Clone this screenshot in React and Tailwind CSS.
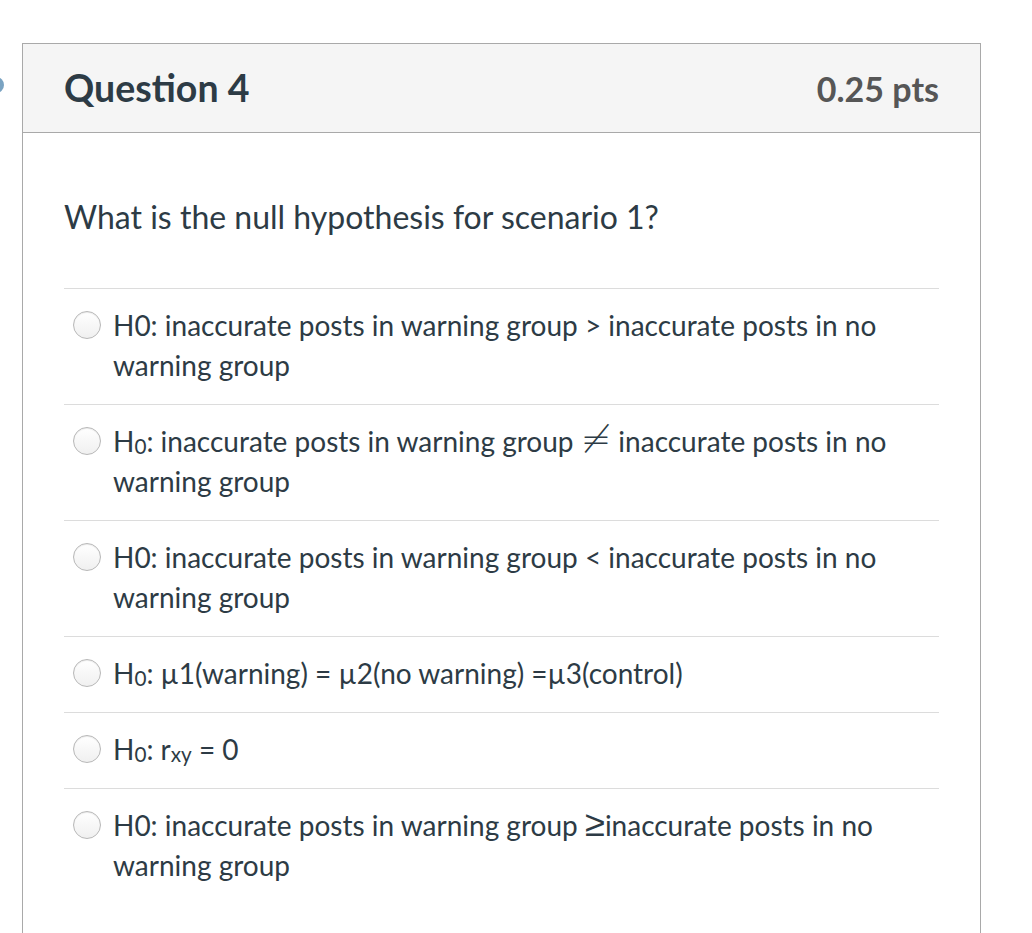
import React from "react";

const Sub = ({ children }) => (
  <sub className="relative bottom-[-0.12em] align-baseline text-[0.74em] leading-none">{children}</sub>
);

const answers = [
  <>H0: inaccurate posts in warning group &gt; inaccurate posts in no warning group</>,
  <>
    H<Sub>0</Sub>: inaccurate posts in warning group{" "}
    <span className="font-['DejaVu_Sans',sans-serif] text-[1.3em] font-extralight leading-none">≠</span> inaccurate posts in no warning group
  </>,
  <>H0: inaccurate posts in warning group &lt; inaccurate posts in no warning group</>,
  <>
    H<Sub>0</Sub>: µ1(warning) = µ2(no warning) =µ3(control)
  </>,
  <>
    H<Sub>0</Sub>: r<Sub>xy</Sub> = 0
  </>,
  <>
    H0: inaccurate posts in warning group{" "}
    <span className="font-['DejaVu_Sans',sans-serif] text-[1.3em] font-extralight leading-none">≥</span>inaccurate posts in no warning group
  </>,
];

function Radio() {
  return (
    <span className="mt-[6px] h-[28px] w-[28px] shrink-0 rounded-full border border-[#b8b8b8] bg-gradient-to-b from-white to-[#f0f0f0] shadow-[inset_0_1px_1px_rgba(0,0,0,0.08)]" />
  );
}

export default function App() {
  return (
    <div className="relative min-h-[960px] bg-white pt-[43px] font-['Lato',sans-serif] text-[#2d3b45]">
      <span className="absolute left-[-12px] top-[77px] h-[16px] w-[16px] rounded-full bg-[#7aa3c2]" />
      <div className="ml-[22px] w-[959px] border border-b-0 border-[#a9a9a9]">
        <div className="flex h-[89px] items-center justify-between border-b border-[#a9a9a9] bg-[#f5f5f5] px-[41px]">
          <h2 className="text-[37.5px] font-bold">Question 4</h2>
          <span className="text-[34px] font-bold text-[#565656]">0.25 pts</span>
        </div>
        <div className="px-[41px] pb-[60px] pt-[64px]">
          <p className="mb-[51px] text-[32px] leading-[40px]">What is the null hypothesis for scenario 1?</p>
          <div>
            {answers.map((a, i) => (
              <div key={i} className="flex gap-[12px] border-t border-[#dcdcdc] pb-[19px] pl-[9px] pt-[16px]">
                <Radio />
                <div className="text-[28px] leading-[40px]">{a}</div>
              </div>
            ))}
          </div>
        </div>
      </div>
    </div>
  );
}
